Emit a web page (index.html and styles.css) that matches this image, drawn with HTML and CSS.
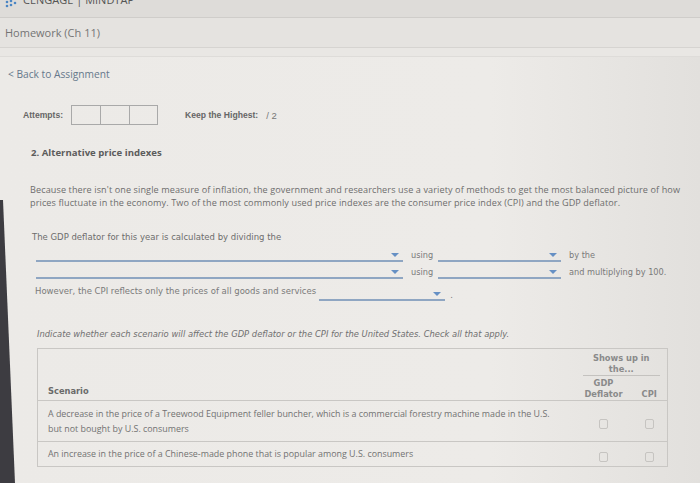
FILE: index.html
```html
<!DOCTYPE html>
<html>
<head>
<meta charset="utf-8">
<link rel="stylesheet" href="styles.css">
</head>
<body>
<div class="page">
  <header class="brand">
    <svg class="logo" width="12" height="8" viewBox="0 0 12 8">
      <circle cx="2" cy="2" r="1.3" fill="#4b86c4"/>
      <circle cx="6" cy="1" r="1.3" fill="#4b86c4"/>
      <circle cx="2" cy="6" r="1.3" fill="#4b86c4"/>
      <circle cx="6" cy="5" r="1.3" fill="#4b86c4"/>
      <circle cx="10" cy="3" r="1.3" fill="#4b86c4"/>
    </svg>
    <span class="brand-name">CENGAGE | MINDTAP</span>
  </header>
  <div class="titlebar">Homework (Ch 11)</div>
  <div class="strip"></div>
  <main class="content">
    <div class="back">&lt; Back to Assignment</div>

    <div class="attempts">
      <span class="label">Attempts:</span>
      <span class="boxes"><span class="box"></span><span class="box"></span><span class="box"></span></span>
      <span class="label keep">Keep the Highest:</span>
      <span class="score">/ 2</span>
    </div>

    <h2 class="qtitle">2. Alternative price indexes</h2>

    <p class="intro">Because there isn't one single measure of inflation, the government and researchers use a variety of methods to get the most balanced picture of how prices fluctuate in the economy. Two of the most commonly used price indexes are the consumer price index (CPI) and the GDP deflator.</p>

    <p class="lead">The GDP deflator for this year is calculated by dividing the</p>

    <div class="fill">
      <div class="fill-row">
        <span class="select wide"><span class="arrow"></span></span>
        <span class="word">using</span>
        <span class="select mid"><span class="arrow"></span></span>
        <span class="word">by the</span>
      </div>
      <div class="fill-row">
        <span class="select wide"><span class="arrow"></span></span>
        <span class="word">using</span>
        <span class="select mid"><span class="arrow"></span></span>
        <span class="word">and multiplying by 100.</span>
      </div>
      <div class="fill-row third">
        <span class="word first">However, the CPI reflects only the prices of all goods and services</span>
        <span class="select short"><span class="arrow"></span></span>
        <span class="word dot">.</span>
      </div>
    </div>

    <p class="instr">Indicate whether each scenario will affect the GDP deflator or the CPI for the United States. Check all that apply.</p>

    <table class="grid">
      <thead>
        <tr>
          <th class="scen" rowspan="2">Scenario</th>
          <th class="group" colspan="2"><div class="group-in">Shows up in<br>the...</div></th>
        </tr>
        <tr>
          <th class="col gdp">GDP<br>Deflator</th>
          <th class="col cpi">CPI</th>
        </tr>
      </thead>
      <tbody>
        <tr>
          <td class="text first-row">A decrease in the price of a Treewood Equipment feller buncher, which is a commercial forestry machine made in the U.S.<br>but not bought by U.S. consumers</td>
          <td class="chk"><span class="cb"></span></td>
          <td class="chk"><span class="cb"></span></td>
        </tr>
        <tr>
          <td class="text second-row">An increase in the price of a Chinese-made phone that is popular among U.S. consumers</td>
          <td class="chk"><span class="cb"></span></td>
          <td class="chk"><span class="cb"></span></td>
        </tr>
      </tbody>
    </table>
  </main>
  <div class="bezel"></div>
</div>
</body>
</html>
```

FILE: styles.css
```css
* { box-sizing: border-box; }
html, body { margin: 0; padding: 0; }
body {
  width: 700px;
  height: 483px;
  overflow: hidden;
  font-family: "Open Sans", "DejaVu Sans", sans-serif;
  color: #6f6f6f;
  background: linear-gradient(to right, #eceae7 0%, #edebe8 70%, #e2e0dd 100%);
}
.page { position: relative; height: 483px; }

.brand {
  height: 18px;
  background: #dedcd9;
  border-bottom: 1px solid #cfcdca;
  display: flex;
  align-items: flex-start;
  overflow: hidden;
  padding-left: 5px;
}
.logo { flex: none; }
.brand-name {
  margin-left: 6px;
  margin-top: -6px;
  font-size: 11px;
  line-height: 12px;
  color: #555;
}

.titlebar {
  height: 29px;
  line-height: 29px;
  padding-left: 5px;
  font-size: 11px;
  color: #747474;
  background: #e5e3e0;
}
.strip {
  height: 10px;
  background: #e9e7e4;
  border-top: 1px solid #d6d4d1;
  border-bottom: 1px solid #dedcd9;
}

.back {
  margin-top: 10px;
  padding-left: 8px;
  font-size: 10.2px;
  line-height: 14px;
  color: #66788b;
}

.attempts {
  margin-top: 24px;
  padding-left: 23px;
  display: flex;
  align-items: center;
  height: 20px;
}
.label {
  font-family: "Liberation Sans", Arial, sans-serif;
  font-weight: bold;
  font-size: 8.6px;
  color: #666;
}
.boxes {
  display: flex;
  margin-left: 8px;
  border: 1px solid #a9a9a9;
  height: 20px;
}
.box {
  width: 29px;
  height: 18px;
  border-right: 1px solid #a9a9a9;
}
.box:last-child { border-right: none; width: 27px; }
.keep { margin-left: 27px; }
.score {
  margin-left: 8px;
  font-family: "Liberation Sans", Arial, sans-serif;
  font-size: 9.5px;
  color: #777;
}

.qtitle {
  margin: 22px 0 0;
  padding-left: 31px;
  font-size: 9.6px;
  line-height: 12px;
  font-weight: bold;
  color: #5c5c5c;
}

.intro {
  margin: 24px 0 0;
  padding-left: 30px;
  width: 688px;
  font-size: 9.1px;
  letter-spacing: 0.1px;
  line-height: 13px;
  color: #6d6d6d;
}

.lead {
  margin: 22px 0 0;
  padding-left: 32px;
  font-family: "DejaVu Sans", sans-serif;
  font-size: 8.5px;
  line-height: 13px;
  color: #6d6d6d;
}

.fill { margin-top: 1px; }
.fill-row {
  display: flex;
  align-items: flex-end;
  height: 17px;
  padding-left: 36px;
  font-family: "DejaVu Sans", sans-serif;
  font-size: 8.2px;
  color: #7a7a7a;
}
.fill-row.third { padding-left: 35px; height: 20px; margin-top: 2px; font-size: 8.5px; }
.select {
  display: flex;
  justify-content: flex-end;
  align-items: center;
  height: 13px;
  border-bottom: 2px solid #8fa6c2;
  padding-right: 4px;
}
.select.wide { width: 367px; }
.select.mid { width: 123px; }
.select.short { width: 126px; margin-left: 3px; }
.arrow {
  width: 0;
  height: 0;
  border-left: 4px solid transparent;
  border-right: 4px solid transparent;
  border-top: 4px solid #6690c4;
}
.word { line-height: 11px; padding-bottom: 1px; }
.fill-row .word:nth-child(2) { margin-left: 8px; width: 27px; }
.fill-row .word:nth-child(4) { margin-left: 8px; }
.word.first { padding-bottom: 4px; }
.word.dot { margin-left: 5px; padding-bottom: 0; }

.instr {
  margin: 27px 0 0;
  padding-left: 37px;
  font-family: "DejaVu Sans", sans-serif;
  font-style: italic;
  font-size: 8.4px;
  line-height: 12px;
  color: #707070;
}

.grid {
  margin: 8px 0 0 37px;
  width: 631px;
  border-collapse: collapse;
  border: 1px solid #c9c7c4;
  font-size: 8.9px;
}
.grid th {
  font-family: "DejaVu Sans", sans-serif;
  font-weight: bold;
  font-size: 8.3px;
  color: #8a8a8a;
  line-height: 11px;
  padding: 0;
}
.grid th.scen {
  text-align: left;
  vertical-align: bottom;
  padding: 0 0 3px 10px;
  color: #6a6a6a;
  border-bottom: 1px solid #c9c7c4;
}
.grid th.group { padding: 4px 7px 0; }
.group-in {
  border-bottom: 1px solid #c4c2bf;
}
.grid th.col {
  vertical-align: bottom;
  padding: 2px 0 0;
  border-bottom: 1px solid #c9c7c4;
}
.grid th.gdp { width: 56px; }
.grid th.cpi { width: 36px; }
.grid td {
  border-bottom: 1px solid #c9c7c4;
}
.grid td.text {
  padding: 5px 10px 5px 10px;
  line-height: 15px;
  color: #727272;
}
.grid td.text.second-row { padding: 4px 10px 5px; }
.grid td.chk {
  text-align: center;
  vertical-align: middle;
  padding-top: 4px;
}
.cb {
  display: inline-block;
  width: 9px;
  height: 10px;
  border: 1px solid #c6c4c1;
  border-radius: 2px;
  vertical-align: middle;
}

.bezel {
  position: absolute;
  left: 0;
  top: 0;
  width: 20px;
  height: 483px;
  background: #3d3c41;
  clip-path: polygon(0 200px, 3px 200px, 15px 483px, 0 483px);
}
```
